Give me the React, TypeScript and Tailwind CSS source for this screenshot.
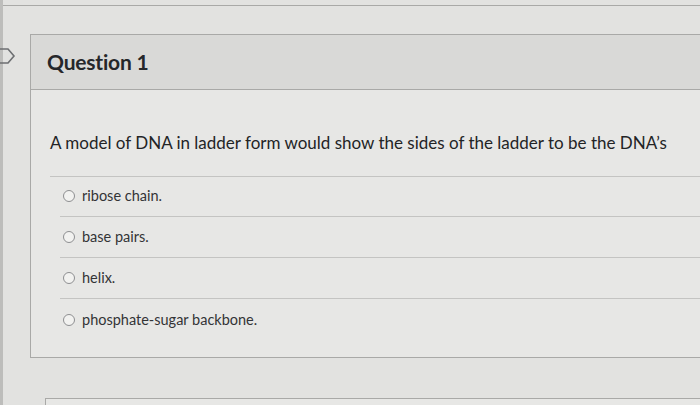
import { useState } from "react";

const options = [
    "ribose chain.",
    "base pairs.",
    "helix.",
    "phosphate-sugar backbone.",
];

const App = () => {
    const [selected, setSelected] = useState<number | null>(null);

    return (
        <div
            className="relative h-[405px] w-[700px] overflow-hidden bg-[#e2e2e0] text-[#2d2f31]"
            style={{ fontFamily: "Lato, 'Open Sans', sans-serif" }}
        >
            {/* left edge of the page frame */}
            <div className="absolute left-0 top-0 h-full w-[3px] bg-[#bdbdbb]" />
            <svg className="absolute left-0 top-[47px]" width="16" height="18" viewBox="0 0 16 18">
                <path d="M-2 2 H8 L14 9 L8 16 H-2" fill="none" stroke="#6d6f72" strokeWidth="1.6" />
            </svg>

            <div className="ml-[3px] h-[6px] border-b border-[#a9a9a7]" />

            <div className="ml-[30px] mt-[28px] border border-r-0 border-[#a9a9a7] bg-[#e7e7e5]">
                <div className="flex h-[55px] items-center border-b border-[#a9a9a7] bg-[#d9d9d7] pl-[16px]">
                    <h2 className="text-[21px] font-bold tracking-[-0.2px] text-[#26272a]">Question 1</h2>
                </div>

                <div className="pl-[19px] pt-[42px]">
                    <p className="text-[17px] leading-[22px] text-[#232426]">
                        A model of DNA in ladder form would show the sides of the ladder to be the DNA’s
                    </p>
                    <div className="mt-[22px] border-t border-[#c4c4c2]" />

                    <ul className="-mt-[1px] pl-[10px]">
                        {options.map((opt, i) => (
                            <li
                                key={opt}
                                className="flex h-[41px] cursor-pointer items-center gap-[7px] border-b border-[#c4c4c2] pl-[3px] last:border-b-0"
                                onClick={() => setSelected(i)}
                            >
                                <span className="flex h-[12px] w-[12px] items-center justify-center rounded-full border-[1.5px] border-[#8e8f91] bg-[#f2f2f0]">
                                    {selected === i && <span className="h-[6px] w-[6px] rounded-full bg-[#3a3b3d]" />}
                                </span>
                                <span className="text-[14.5px] text-[#333436]">{opt}</span>
                            </li>
                        ))}
                    </ul>
                    <div className="h-[17px]" />
                </div>
            </div>

            <div className="ml-[45px] mt-[40px] h-[20px] border border-r-0 border-[#a9a9a7] bg-[#e7e7e5]" />
        </div>
    );
};

export default App;
